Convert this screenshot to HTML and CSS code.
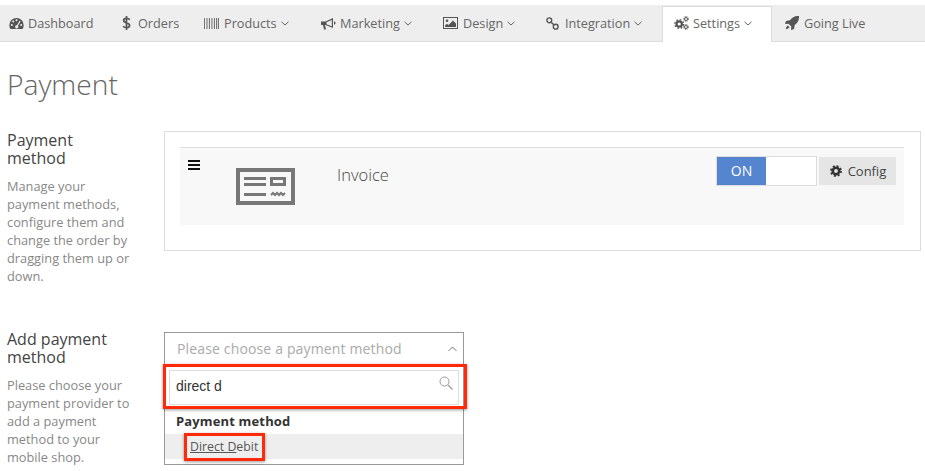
FILE: index.html
```html
<!DOCTYPE html>
<html lang="en">
<head>
<meta charset="UTF-8">
<meta name="viewport" content="width=device-width, initial-scale=1.0">
<title>Payment</title>
<link rel="stylesheet" href="styles.css">
</head>
<body>
<nav class="nav">
    <a class="nav-item nav-dashboard">
        <svg class="ico" width="15" height="13" viewBox="0 0 15 13"><path d="M7.5 1A7.2 7.2 0 0 0 .3 8.2c0 1.5.4 2.8 1.1 3.8h12.2c.7-1 1.1-2.3 1.1-3.8A7.2 7.2 0 0 0 7.5 1z" fill="#555"/><g fill="#eee"><circle cx="2.8" cy="8" r="1"/><circle cx="4.2" cy="4.6" r="1"/><circle cx="7.5" cy="3.3" r="1"/><circle cx="12.2" cy="8" r="1"/><path d="M10.6 3.8l1 .6-2.6 4.4a1.6 1.6 0 1 1-1-.6z"/></g></svg>
        Dashboard
    </a>
    <a class="nav-item nav-orders">
        <svg class="ico" width="9" height="16" viewBox="0 0 9 16"><path d="M7.8 4.6C7 3.8 5.8 3.3 4.5 3.3 2.9 3.3 1.6 4.1 1.6 5.5c0 3 6 1.8 6 5 0 1.400-1.300 2.200-3 2.200-1.400 0-2.700-.6-3.500-1.500M4.500 1v14" fill="none" stroke="#555" stroke-width="1.700"/></svg>
        Orders
    </a>
    <a class="nav-item nav-products">
        <svg class="ico" width="15" height="11" viewBox="0 0 15 11"><path d="M0 0h1v11H0zM2 0h.6v11H2zM3.500 0h.6v11h-.6zM5 0h1v11H5zM7 0h.6v11H7zM8.500 0h.6v11h-.6zM10 0h1v11h-1zM12 0h1.200v11H12zM14 0h1v11h-1z" fill="#777"/></svg>
        Products <span class="caret"><svg width="8" height="5" viewBox="0 0 8 5"><path d="M.5.8L4 4l3.500-3.200" fill="none" stroke="#666"/></svg></span>
    </a>
    <a class="nav-item nav-marketing">
        <svg class="ico" width="15" height="13" viewBox="0 0 15 13"><path d="M0 4.500h4.500L12 1v10L4.500 8H4l1 4.500H3L2 8H0zM13 4.200c1 .4 1.600 1.100 1.600 1.800s-.6 1.400-1.600 1.800z" fill="#555"/><path d="M5.500 5.300v2L10.800 9.200V2.900z" fill="#eee"/></svg>
        Marketing <span class="caret"><svg width="8" height="5" viewBox="0 0 8 5"><path d="M.5.8L4 4l3.500-3.200" fill="none" stroke="#666"/></svg></span>
    </a>
    <a class="nav-item nav-design">
        <svg class="ico" width="15" height="12" viewBox="0 0 15 12"><rect x=".5" y=".5" width="14" height="11" fill="#eee" stroke="#555"/><circle cx="4" cy="3.800" r="1.300" fill="#555"/><path d="M2 10V8.500l2-1.700 1.500 1.200L10 3.500l3 3V10z" fill="#555"/></svg>
        Design <span class="caret"><svg width="8" height="5" viewBox="0 0 8 5"><path d="M.5.8L4 4l3.500-3.200" fill="none" stroke="#666"/></svg></span>
    </a>
    <a class="nav-item nav-integration">
        <svg class="ico" width="13" height="13" viewBox="0 0 13 13"><g fill="none" stroke="#555" stroke-width="1.400"><circle cx="3.300" cy="3.300" r="2.400"/><circle cx="9.700" cy="9.700" r="2.400"/><path d="M5 5l3 3"/></g></svg>
        Integration <span class="caret"><svg width="8" height="5" viewBox="0 0 8 5"><path d="M.5.8L4 4l3.500-3.200" fill="none" stroke="#666"/></svg></span>
    </a>
    <a class="nav-item nav-settings">
        <svg class="ico" width="15" height="14" viewBox="0 0 15 14"><g fill="none" stroke="#555"><circle cx="5.200" cy="8" r="2.700" stroke-width="2.200"/><circle cx="5.200" cy="8" r="4.400" stroke-width="1.300" stroke-dasharray="1.700 1.750"/><circle cx="12" cy="3" r="1.500" stroke-width="1"/><circle cx="12" cy="3" r="2.500" stroke-width=".9" stroke-dasharray="1 1"/><circle cx="12" cy="11" r="1.500" stroke-width="1"/><circle cx="12" cy="11" r="2.500" stroke-width=".9" stroke-dasharray="1 1"/></g></svg>
        Settings <span class="caret"><svg width="8" height="5" viewBox="0 0 8 5"><path d="M.5.8L4 4l3.500-3.200" fill="none" stroke="#666"/></svg></span>
    </a>
    <a class="nav-item nav-live">
        <svg class="ico" width="14" height="14" viewBox="0 0 14 14"><path d="M14 0c.2 4-1.200 6.800-4.300 9L9 13l-3 1 .3-3.500-2.800-2.800L0 8l1-3 4-.7C7.200 1.200 10 -.2 14 0zM2.800 9.500l1.700 1.700C3.600 12.600 2 13 .8 13.200 1 12 1.400 10.400 2.800 9.500z" fill="#555"/></svg>
        Going Live
    </a>
</nav>

<main class="page">
    <h1>Payment</h1>

    <section class="row row-methods">
        <div class="side">
            <h3>Payment method</h3>
            <p>Manage your payment methods, configure them and change the order by dragging them up or down.</p>
        </div>
        <div class="panel">
            <div class="method">
                <svg class="handle" width="12" height="10" viewBox="0 0 12 10"><path d="M0 0h12v2H0zM0 4h12v2H0zM0 8h12v2H0z" fill="#111"/></svg>
                <svg class="method-icon" width="59" height="37" viewBox="0 0 59 37">
                    <rect x="2" y="2" width="55" height="33" fill="#f8f8f8" stroke="#777" stroke-width="4"/>
                    <path d="M8 9h22v3H8zM8 15h22v3H8zM8 25h22v3H8z" fill="#777"/>
                    <rect x="35.500" y="10.500" width="13" height="6" fill="none" stroke="#777" stroke-width="3"/>
                    <path d="M35 27l2-2 2 2 2-2 2 2 2-2 2 2 2-2" fill="none" stroke="#777" stroke-width="2"/>
                </svg>
                <span class="method-name">Invoice</span>
                <div class="toggle"><span class="toggle-on">ON</span></div>
                <button class="btn-config">
                    <svg width="12" height="12" viewBox="0 0 12 12"><circle cx="6" cy="6" r="3.200" fill="none" stroke="#333" stroke-width="2.600"/><circle cx="6" cy="6" r="5" fill="none" stroke="#333" stroke-width="1.800" stroke-dasharray="2 1.930"/></svg>
                    Config
                </button>
            </div>
        </div>
    </section>

    <section class="row row-add">
        <div class="side">
            <h3>Add payment method</h3>
            <p>Please choose your payment provider to add a payment method to your mobile shop.</p>
        </div>
        <div class="select">
            <div class="select-head">
                <span>Please choose a payment method</span>
                <svg width="9" height="6" viewBox="0 0 9 6"><path d="M.5 5L4.500 1l4 4" fill="none" stroke="#777"/></svg>
            </div>
            <div class="select-search">
                <span>direct d</span>
                <svg width="14" height="14" viewBox="0 0 14 14"><circle cx="5.500" cy="5.500" r="4.500" fill="none" stroke="#999"/><path d="M9 9l4.500 4.500" stroke="#999" stroke-width="1.300"/></svg>
            </div>
            <div class="select-group">Payment method</div>
            <div class="select-option"><span class="typed">Direct D</span>ebit</div>
            <div class="mark mark-search"></div>
            <div class="mark mark-option"></div>
        </div>
    </section>
</main>
</body>
</html>
```

FILE: styles.css
```css
html, body {
    margin: 0;
    height: 471px;
    overflow: hidden;
}
body {
    font-family: "Open Sans", sans-serif;
    font-size: 13px;
    color: #555;
    background: #fff;
}
.nav {
    display: flex;
    height: 36px;
    margin-top: 5px;
    background: #eee;
    border-bottom: 1px solid #ddd;
}
.nav-item {
    display: flex;
    align-items: center;
    box-sizing: border-box;
    height: 36px;
    font-size: 12.7px;
    color: #666;
    white-space: nowrap;
}
.ico {
    flex: none;
    margin-right: 5px;
}
.caret {
    display: inline-flex;
    margin-left: 4px;
    padding-top: 1px;
}
.nav-dashboard { margin-left: 9px; width: 113px; }
.nav-dashboard .ico { margin-right: 4px; }
.nav-orders { width: 82px; }
.nav-orders .ico { margin-right: 7px; }
.nav-products { width: 117px; }
.nav-marketing { width: 122px; }
.nav-marketing .ico { margin-right: 4px; }
.nav-design { width: 103px; }
.nav-integration { width: 116px; }
.nav-integration .ico { margin-right: 6px; }
.nav-settings {
    width: 110px;
    margin-right: 13px;
    margin-top: 1px;
    height: 36px;
    padding: 0 0 4px 11px;
    background: #fff;
    border: 1px solid #ddd;
    border-bottom: 0;
}
.nav-settings .ico { margin-right: 4px; }
.nav-live .ico { margin-right: 5px; }
.page {
    padding: 0 4px 0 7px;
}
h1 {
    margin: 22px 0 27px;
    font-size: 28.2px;
    line-height: 40px;
    font-weight: 300;
    color: #666;
}
.row {
    display: flex;
}
.side {
    flex: none;
    width: 130px;
    margin-right: 27px;
}
.side h3 {
    margin: 0 0 10px;
    padding-right: 10px;
    font-size: 16px;
    line-height: 18px;
    font-weight: 400;
    color: #444;
}
.side p {
    margin: 0;
    font-size: 12.8px;
    line-height: 18px;
    color: #888;
}
.row-methods {
    height: 199px;
}
.panel {
    box-sizing: border-box;
    flex: 1;
    height: 120px;
    padding: 15px 16px 0 15px;
    border: 1px solid #ddd;
}
.method {
    display: flex;
    align-items: flex-start;
    height: 77px;
    background: #f8f8f8;
    border-top: 1px solid #ddd;
}
.handle {
    flex: none;
    margin: 12px 36px 0 8px;
}
.method-icon {
    flex: none;
    margin-top: 20px;
}
.method-name {
    flex: 1;
    margin: 16px 0 0 42px;
    font-size: 16.5px;
    line-height: 22px;
    font-weight: 300;
    color: #444;
}
.toggle {
    box-sizing: border-box;
    width: 101px;
    height: 30px;
    margin-top: 8px;
    background: #fff;
    border: 1px solid #ddd;
}
.toggle-on {
    display: block;
    width: 49px;
    height: 28px;
    font-size: 14px;
    line-height: 28px;
    text-align: center;
    color: #fff;
    background: #5585cf;
}
.btn-config {
    display: flex;
    align-items: center;
    justify-content: center;
    gap: 6px;
    width: 77px;
    height: 28px;
    margin: 9px 8px 0 2px;
    padding: 0 0 0 1px;
    border: 0;
    font-family: inherit;
    font-size: 13px;
    color: #444;
    background: #e5e5e5;
}
.select {
    position: relative;
    box-sizing: border-box;
    flex: none;
    width: 300px;
    height: 133px;
    margin-top: 2px;
    border: 1px solid #999;
}
.select-head {
    display: flex;
    align-items: center;
    justify-content: space-between;
    height: 31px;
    padding: 0 6px 0 12px;
    font-size: 14px;
    letter-spacing: .15px;
    color: #aaa;
}
.select-search {
    display: flex;
    align-items: center;
    justify-content: space-between;
    box-sizing: border-box;
    height: 35px;
    margin: 6px 4px 0;
    padding: 0 5px 3px 6px;
    font-family: "Liberation Sans", sans-serif;
    font-size: 14px;
    color: #333;
    border: 1px solid #ddd;
}
.select-search svg {
    margin-bottom: 6px;
}
.select-group {
    margin: 7px 0 0 11px;
    font-size: 13px;
    line-height: 18px;
    font-weight: 700;
    letter-spacing: .15px;
    color: #333;
}
.select-option {
    height: 25px;
    margin-top: 4px;
    padding-left: 25px;
    font-size: 12.3px;
    line-height: 25px;
    color: #555;
    background: #eee;
}
.typed {
    text-decoration: underline;
}
.mark {
    position: absolute;
    box-sizing: border-box;
    border: 3px solid #ff2a0a;
    box-shadow: 0 1px 3px rgba(0, 0, 0, .4);
}
.mark-search {
    left: -2px;
    top: 31px;
    width: 304px;
    height: 45px;
}
.mark-option {
    left: 19px;
    top: 100px;
    width: 81px;
    height: 28px;
}
```
